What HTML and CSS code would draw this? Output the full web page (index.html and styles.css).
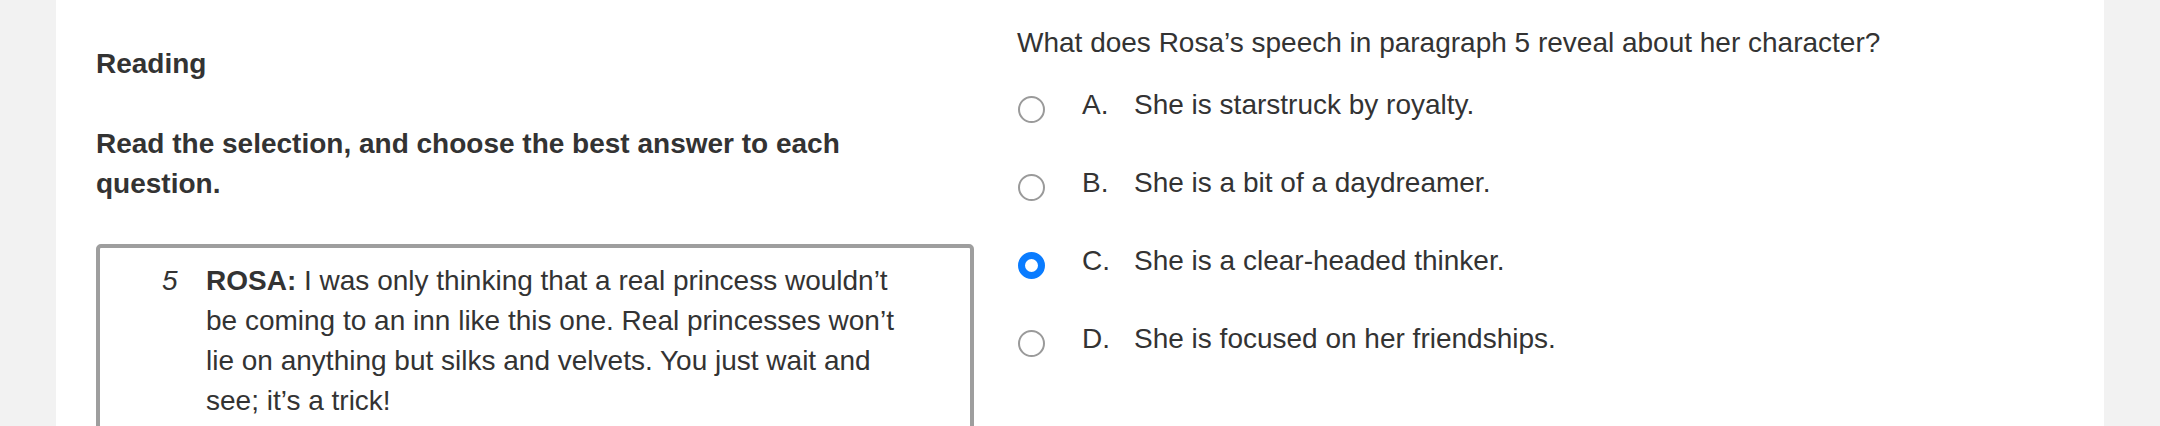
FILE: index.html
```html
<!DOCTYPE html>
<html lang="en">
<head>
<meta charset="utf-8">
<title>Reading</title>
<link rel="stylesheet" href="styles.css">
</head>
<body>
<main class="page">
  <section class="left">
    <h2 class="title">Reading</h2>
    <p class="instructions">Read the selection, and choose the best answer to each question.</p>
    <div class="passage">
      <div class="para">
        <span class="num">5</span>
        <p class="text"><b>ROSA:</b> I was only thinking that a real princess wouldn’t be coming to an inn like this one. Real princesses won’t lie on anything but silks and velvets. You just wait and see; it’s a trick!</p>
      </div>
    </div>
  </section>
  <section class="right">
    <p class="question">What does Rosa’s speech in paragraph 5 reveal about her character?</p>
    <ul class="options">
      <li class="option"><span class="radio"></span><span class="letter">A.</span><span class="answer">She is starstruck by royalty.</span></li>
      <li class="option"><span class="radio"></span><span class="letter">B.</span><span class="answer">She is a bit of a daydreamer.</span></li>
      <li class="option"><span class="radio checked"></span><span class="letter">C.</span><span class="answer">She is a clear-headed thinker.</span></li>
      <li class="option"><span class="radio"></span><span class="letter">D.</span><span class="answer">She is focused on her friendships.</span></li>
    </ul>
  </section>
</main>
</body>
</html>
```

FILE: styles.css
```css
html, body {
  margin: 0;
  padding: 0;
  background: #f2f2f2;
  height: 100%;
  overflow: hidden;
}

.page {
  margin: 0 56px;
  height: 426px;
  background: #ffffff;
  padding: 0 40px;
  box-sizing: border-box;
  display: grid;
  grid-template-columns: 878px 1fr;
  column-gap: 43px;
  font-family: "Liberation Sans", Arial, Helvetica, sans-serif;
  font-size: 28px;
  line-height: 40px;
  color: #333333;
}

.left {
  padding-top: 44px;
}

.title {
  margin: 0 0 40px;
  font-size: 28px;
  font-weight: bold;
  line-height: 40px;
}

.instructions {
  margin: 0 0 40px;
  max-width: 820px;
  font-weight: bold;
}

.passage {
  border: 4px solid #9e9e9e;
  border-radius: 5px;
  padding: 13px 56px 20px 60px;
  height: 300px;
}

.para {
  display: flex;
}

.num {
  flex: 0 0 46px;
  font-style: italic;
  padding-left: 2px;
  box-sizing: border-box;
}

.text {
  margin: 0;
  flex: 1;
}

.text b {
  font-weight: bold;
}

.right {
  padding-top: 23px;
}

.question {
  margin: 0 0 22px;
}

.options {
  list-style: none;
  margin: 0;
  padding: 0;
  display: flex;
  flex-direction: column;
  gap: 38px;
}

.option {
  display: flex;
  align-items: flex-start;
}

.radio {
  flex: 0 0 auto;
  width: 27px;
  height: 27px;
  margin-top: 11px;
  margin-left: 1px;
  border: 2.5px solid #9a9a9a;
  border-radius: 50%;
  box-sizing: border-box;
  background: #ffffff;
}

.radio.checked {
  border: 7.5px solid #0a7cff;
  background: #ffffff;
}

.letter {
  width: 52px;
  margin-left: 37px;
  flex: 0 0 auto;
}

.answer {
  flex: 1;
}
```
